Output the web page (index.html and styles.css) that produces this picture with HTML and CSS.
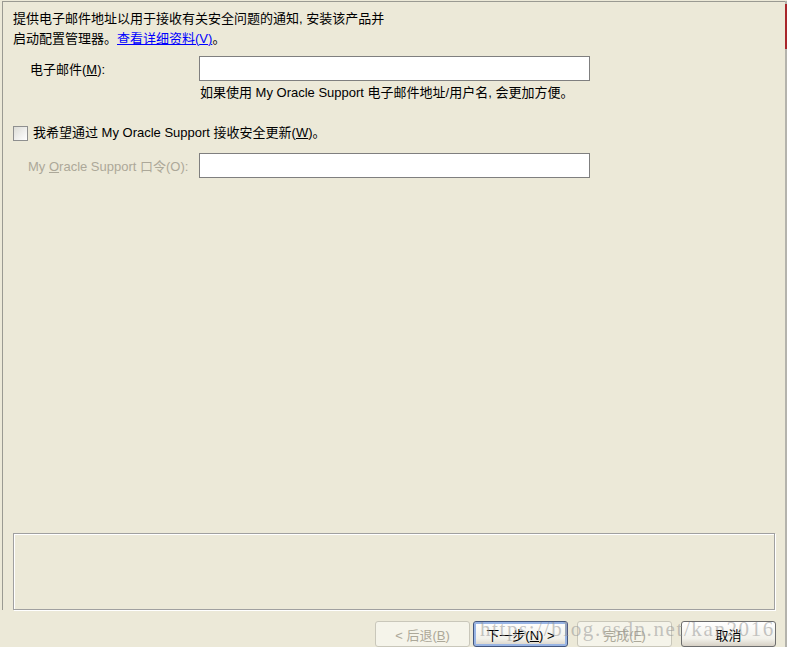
FILE: index.html
```html
<!DOCTYPE html>
<html lang="zh-CN">
<head>
    <meta charset="UTF-8">
    <title>配置安全更新</title>
    <link rel="stylesheet" href="styles.css">
</head>
<body>
    <div class="wizard">
        <div class="page">
            <p class="intro">
                提供电子邮件地址以用于接收有关安全问题的通知, 安装该产品并<br>
                启动配置管理器。<a href="#" class="link">查看详细资料(<u>V</u>)</a>。
            </p>

            <div class="form-row email-row">
                <label class="field-label" for="email">电子邮件(<u>M</u>):</label>
                <input type="text" id="email" class="text-field">
            </div>
            <p class="hint">如果使用 My Oracle Support 电子邮件地址/用户名, 会更加方便。</p>

            <label class="check-row">
                <span class="checkbox"></span>
                <span>我希望通过 My Oracle Support 接收安全更新(<u>W</u>)。</span>
            </label>

            <div class="form-row password-row">
                <label class="field-label disabled" for="password">My <u>O</u>racle Support 口令(O):</label>
                <input type="password" id="password" class="text-field">
            </div>

            <div class="spacer"></div>

            <div class="message-box"></div>
        </div>

        <div class="button-bar">
            <button class="btn btn-disabled btn-back" type="button">&lt; 后退(<u>B</u>)</button>
            <button class="btn btn-focus btn-next" type="button">下一步(<u>N</u>) &gt;</button>
            <button class="btn btn-disabled btn-finish" type="button">完成(<u>F</u>)</button>
            <button class="btn btn-cancel" type="button">取消</button>
        </div>

        <div class="edge-mark"></div>
        <div class="watermark">https://blog.csdn.net/kan2016</div>
    </div>
</body>
</html>
```

FILE: styles.css
```css
/* Reset */
* {
    box-sizing: border-box;
    margin: 0;
    padding: 0;
}

body {
    background-color: #ece9d8;
    font-family: "Liberation Sans", "Noto Sans CJK SC", sans-serif;
    font-size: 13px;
    color: #000;
    overflow: hidden;
}

/* Wizard frame */
.wizard {
    position: relative;
    width: 787px;
    height: 647px;
    border-right: 2px solid #b4b3ac;
}

.page {
    display: flex;
    flex-direction: column;
    height: 609px;
    margin-left: 2px;
    margin-top: 1px;
    border-left: 1px solid #9a9a92;
    border-top: 1px solid #9a9a92;
    padding: 0 10px 0 10px;
}

/* Intro text */
.intro {
    line-height: 20px;
    padding-top: 7px;
}

.link {
    color: #0000ff;
}

/* Form rows */
.form-row {
    display: flex;
    align-items: center;
}

.field-label {
    width: 186px;
    padding-left: 17px;
}

.field-label.disabled {
    color: #aca899;
    padding-left: 15px;
}

.text-field {
    width: 391px;
    height: 25px;
    border: 1px solid #7f7f7f;
    background-color: #fff;
    outline: none;
}

.email-row {
    margin-top: 7px;
}

.hint {
    padding-left: 187px;
    line-height: 18px;
    margin-top: 3px;
}

/* Checkbox */
.check-row {
    display: flex;
    align-items: center;
    gap: 5px;
    margin-top: 21px;
    line-height: 20px;
}

.checkbox {
    display: inline-block;
    width: 15px;
    height: 15px;
    border: 1px solid #8e8f8f;
    background: linear-gradient(135deg, #dcdcd6, #ffffff);
}

.password-row {
    margin-top: 10px;
}

.spacer {
    flex: 1;
}

/* Bottom message box (etched border) */
.message-box {
    height: 77px;
    border: 1px solid #a0a0a0;
    box-shadow: inset 1px 1px 0 #fff, 1px 1px 0 #fff;
}

/* Buttons */
.button-bar {
    display: flex;
    padding-left: 375px;
    margin-top: 11px;
}

.btn {
    width: 95px;
    height: 26px;
    font-family: "Liberation Sans", "Noto Sans CJK SC", sans-serif;
    font-size: 13px;
    border-radius: 3px;
    border: 1px solid #6d6d6d;
    background: linear-gradient(#ffffff, #f2f1ea 70%, #d6d0c5);
    color: #000;
}

.btn-disabled {
    color: #aca899;
    border-color: #c9c7ba;
    background: #f5f4ea;
}

.btn-focus {
    box-shadow: inset 0 0 0 2px #98b4e4;
    border-color: #42557d;
}

.btn-next {
    margin-left: 3px;
}

.btn-finish {
    margin-left: 9px;
}

.btn-cancel {
    margin-left: 9px;
}

/* Red strip at the top right corner of the window edge */
.edge-mark {
    position: absolute;
    right: -2px;
    top: 3px;
    width: 2px;
    height: 45px;
    background-color: #a8262a;
}

/* Watermark text over buttons */
.watermark {
    position: absolute;
    left: 480px;
    top: 616px;
    font-family: "Liberation Serif", serif;
    font-size: 21px;
    letter-spacing: 1.6px;
    color: rgba(150, 150, 150, 0.55);
    pointer-events: none;
}
```
